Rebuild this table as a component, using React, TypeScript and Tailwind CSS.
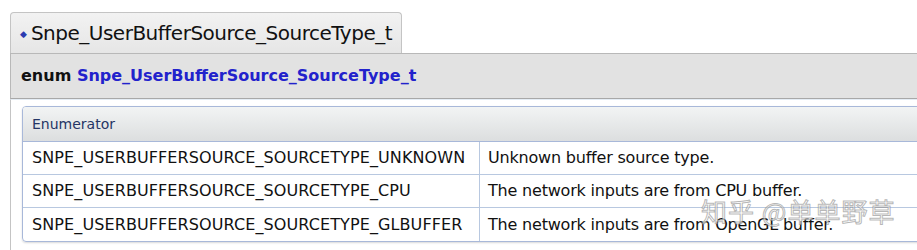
export default function App() {
  const rows = [
    ['SNPE_USERBUFFERSOURCE_SOURCETYPE_UNKNOWN', 'Unknown buffer source type.'],
    ['SNPE_USERBUFFERSOURCE_SOURCETYPE_CPU', 'The network inputs are from CPU buffer.'],
    ['SNPE_USERBUFFERSOURCE_SOURCETYPE_GLBUFFER', 'The network inputs are from OpenGL buffer.'],
  ]

  return (
    <div className="relative w-[917px] h-[250px] overflow-hidden bg-white pt-[12px] pl-[10px] font-['DejaVu_Sans',sans-serif] text-[#111]">
      {/* tab title */}
      <div className="inline-flex items-center h-[41px] pl-[9px] pr-[9px] border border-b-0 border-[#c4c4c4] rounded-t-[4px] bg-gradient-to-b from-[#f2f2f2] to-[#e6e6e6]">
        <span className="text-[9px] text-[#2a3bb0] mr-[4px] mt-[4px]">◆</span>
        <span className="text-[20px] leading-none tracking-[-0.5px]">Snpe_UserBufferSource_SourceType_t</span>
      </div>

      <div className="w-[960px]">
        {/* prototype header */}
        <div className="h-[46px] flex items-center pl-[10px] border-t border-l border-b border-[#b8b8b8] border-b-[#a8a8a8] bg-[#e2e2e2]">
          <span className="text-[16px] font-bold">
            enum <span className="text-[#2222cc]">Snpe_UserBufferSource_SourceType_t</span>
          </span>
        </div>

        {/* doc body */}
        <div className="border-l border-[#c4c4c4] border-t border-t-[#e4ecf4] pt-[6px] pl-[11px] pb-[10px]">
          <div className="w-[1000px] border border-[#a8b8d9] rounded-[4px] shadow-[0_1px_2px_rgba(0,0,0,0.15)] overflow-hidden">
            <div className="h-[35px] flex items-center pl-[9px] bg-gradient-to-b from-[#f2f4f4] to-[#dcdedf] border-b border-[#a8b8d9] text-[14px] text-[#253565]">
              Enumerator
            </div>
            {rows.map(([name, desc], i) => (
              <div key={name} className={`flex h-[33px] ${i < rows.length - 1 ? 'border-b border-[#b8c8e0]' : ''}`}>
                <div className="w-[457px] flex items-center pl-[9px] border-r border-[#b8c8e0] text-[16px] tracking-[0.1px]">
                  {name}
                </div>
                <div className="flex-1 flex items-center pl-[8px] text-[16px] tracking-[-0.2px]">
                  {desc}
                </div>
              </div>
            ))}
          </div>
        </div>
      </div>

      {/* watermark */}
      <div className="absolute left-[701px] top-[198px] text-[26px] leading-none text-[rgba(255,255,255,0.6)] [-webkit-text-stroke:1px_rgba(120,120,120,0.55)] font-['Noto_Sans_CJK_SC',sans-serif] tracking-[1px]">
        知乎 @单单野草
      </div>
    </div>
  )
}
